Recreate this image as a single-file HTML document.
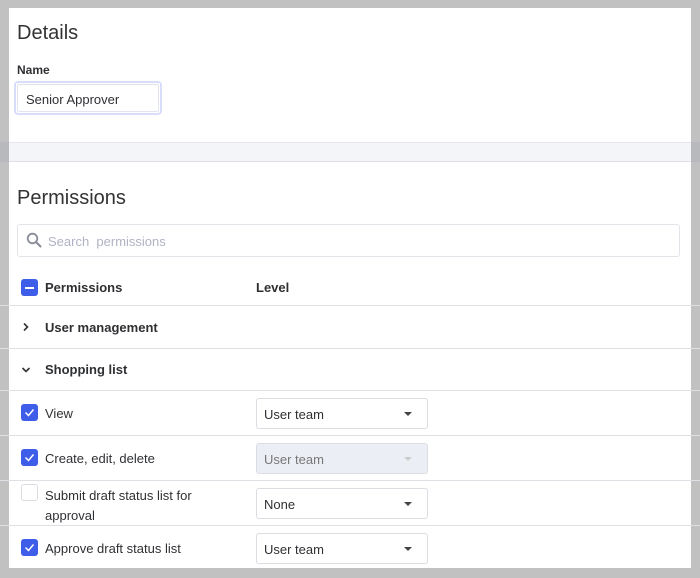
<!DOCTYPE html>
<html><head><style>
*{box-sizing:border-box;margin:0;padding:0}
body{width:700px;height:578px;background:#c1c1c1;font-family:"Liberation Sans",sans-serif;color:#2f3033;position:relative;overflow:hidden}
.p{position:absolute;left:9px;width:682px;background:#fff}
.a{position:absolute}
h2{position:absolute;font-weight:normal;font-size:20px;color:#333}
.line{position:absolute;left:0;width:700px;height:1px;background:#dfe0e6}
.cb{position:absolute;left:21px;width:17px;height:17px;border-radius:3px;background:#3e5de8}
.cb.e{background:#fff;border:1px solid #dcdde3}
.t{position:absolute;left:45px;font-size:13px}
.b{font-weight:bold}
.sel{position:absolute;left:256px;width:172px;height:31px;border:1px solid #dcdde3;border-radius:3px;font-size:13px;padding:8px 0 0 7px}
.sel:after{content:"";position:absolute;right:15px;top:13px;border:4px solid transparent;border-top:4px solid #444;border-bottom:0}
.sel.d{background:#eceef5;color:#777}
.sel.d:after{border-top-color:#ccc}
</style></head><body>
<div class="p" style="top:8px;height:134px"></div>
<div class="a" style="left:0;top:142px;width:700px;height:20px;background:#b8b9bc"></div>
<div class="a" style="left:9px;top:142px;width:682px;height:20px;background:#f4f5f9;border-top:1px solid #e6e7ec;border-bottom:1px solid #e0e1e6"></div>
<div class="p" style="top:162px;height:406px"></div>
<h2 style="left:17px;top:22px">Details</h2>
<div class="a b" style="left:17px;top:63px;font-size:12px">Name</div>
<div class="a" style="left:14px;top:81px;width:148px;height:34px;border:2px solid #d8defa;border-radius:4px;padding:1px"><div style="border:1px solid #e2e5f0;border-radius:2px;height:100%;font-size:13px;padding:7px 0 0 8px">Senior Approver</div></div>
<h2 style="left:17px;top:187px">Permissions</h2>
<div class="a" style="left:17px;top:224px;width:663px;height:33px;border:1px solid #e3e4ea;border-radius:3px"></div>
<svg class="a" style="left:26px;top:232px" width="16" height="16" viewBox="0 0 16 16"><circle cx="6.5" cy="6.5" r="4.8" fill="none" stroke="#888c99" stroke-width="1.8"/><path d="M10 10l4.5 4.5" stroke="#888c99" stroke-width="2" stroke-linecap="round"/></svg>
<div class="a" style="left:48px;top:234px;font-size:13px;color:#b0b3c4">Search&nbsp; permissions</div>
<div class="cb" style="top:279px"><div style="position:absolute;left:4px;top:7.5px;width:9px;height:2px;background:#fff"></div></div>
<div class="t b" style="top:280px">Permissions</div>
<div class="a b" style="left:256px;top:280px;font-size:13px">Level</div>
<div class="line" style="top:305px"></div>
<svg class="a" style="left:20px;top:321px" width="12" height="12"><path d="M4 2.5l3.5 3.5-3.5 3.5" fill="none" stroke="#333" stroke-width="1.6"/></svg>
<div class="t b" style="top:320px">User management</div>
<div class="line" style="top:348px"></div>
<svg class="a" style="left:20px;top:364px" width="12" height="12"><path d="M2.5 4l3.5 3.5 3.5-3.5" fill="none" stroke="#333" stroke-width="1.6"/></svg>
<div class="t b" style="top:362px">Shopping list</div>
<div class="line" style="top:390px"></div>
<div class="cb" style="top:404px"><svg width="17" height="17"><path d="M4.5 8.5l3 3 5-6" fill="none" stroke="#fff" stroke-width="1.5"/></svg></div>
<div class="t" style="top:406px">View</div>
<div class="sel" style="top:398px">User team</div>
<div class="line" style="top:435px"></div>
<div class="cb" style="top:449px"><svg width="17" height="17"><path d="M4.5 8.5l3 3 5-6" fill="none" stroke="#fff" stroke-width="1.5"/></svg></div>
<div class="t" style="top:451px">Create, edit, delete</div>
<div class="sel d" style="top:443px">User team</div>
<div class="line" style="top:480px"></div>
<div class="cb e" style="top:484px"></div>
<div class="t" style="top:486px;line-height:20px">Submit draft status list for<br>approval</div>
<div class="sel" style="top:488px">None</div>
<div class="line" style="top:525px"></div>
<div class="cb" style="top:539px"><svg width="17" height="17"><path d="M4.5 8.5l3 3 5-6" fill="none" stroke="#fff" stroke-width="1.5"/></svg></div>
<div class="t" style="top:541px">Approve draft status list</div>
<div class="sel" style="top:533px">User team</div>
</body></html>
